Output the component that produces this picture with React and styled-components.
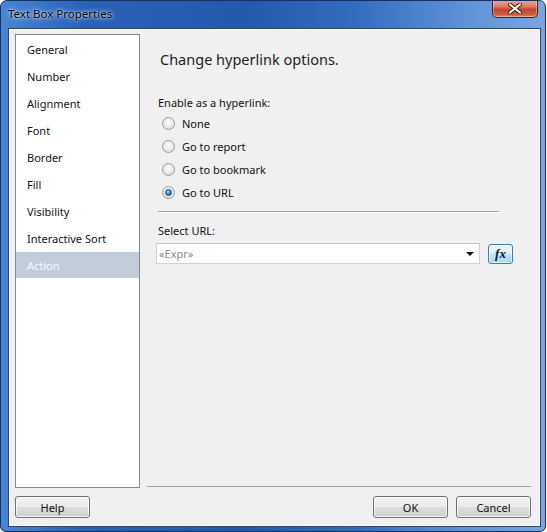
import React from "react";
import styled, { createGlobalStyle } from "styled-components";

const Global = createGlobalStyle`
  html, body { margin: 0; padding: 0; background: #ffffff; }
  body { font-family: "Noto Sans", "Open Sans", sans-serif; }
  * { box-sizing: border-box; }
`;

const Window = styled.div`
  width: 546px;
  height: 532px;
  border: 1px solid #163060;
  border-radius: 7px 7px 6px 6px;
  background-color: #2a62b8;
  background-image: linear-gradient(90deg, #4a85d4 0%, #2a62b8 15%, #2459ad 45%, #346cbd 65%, #5d92d8 85%, #7aa5e0 100%);
  display: flex;
  flex-direction: column;
  padding: 0 4px 4px 7px;
  overflow: hidden;
`;

const TitleBar = styled.div`
  height: 27px;
  display: flex;
  align-items: flex-start;
  justify-content: space-between;
`;

const Title = styled.div`
  font-size: 11.5px;
  line-height: 12px;
  color: #000;
  padding-top: 7px;
  text-shadow: 0 0 5px rgba(255,255,255,0.9), 0 0 2px rgba(255,255,255,0.8);
`;

const CloseButton = styled.div`
  width: 46px;
  height: 18px;
  margin-top: -1px;
  margin-right: 3px;
  border: 1px solid #4b1d17;
  border-top: none;
  border-radius: 0 0 5px 5px;
  background: linear-gradient(180deg, #e9aa98 0%, #d77b65 40%, #c24530 55%, #cf5a3d 85%, #e18b66 100%);
  box-shadow: inset 0 0 0 1px rgba(255,255,255,0.35);
  display: flex;
  align-items: center;
  justify-content: center;
`;

const Client = styled.div`
  flex: 1;
  background: #f0f0f0;
  border: 1px solid #2c4670;
  box-shadow: inset 0 0 0 1px rgba(255,255,255,0.6);
  display: flex;
  flex-direction: column;
  padding: 5px 9px 8px 6px;
`;

const Body = styled.div`
  flex: 1;
  display: flex;
  gap: 7px;
`;

const NavList = styled.ul`
  width: 125px;
  margin: 0;
  padding: 1px 0 0;
  list-style: none;
  background: #ffffff;
  border: 1px solid #828790;
`;

const NavItem = styled.li`
  height: 26px;
  margin-bottom: 1px;
  padding-left: 11px;
  display: flex;
  align-items: center;
  font-size: 11px;
  color: ${(p) => (p.$active ? "#f7f9fb" : "#111")};
  background: ${(p) => (p.$active ? "#c1cddb" : "transparent")};
`;

const Content = styled.div`
  flex: 1;
  display: flex;
  flex-direction: column;
  padding: 15px 0 0 9px;
  margin-bottom: 1px;
  border-bottom: 1px solid #a0a0a0;
`;

const Heading = styled.h1`
  margin: 0 0 26px 4px;
  font-size: 14.5px;
  font-weight: normal;
  line-height: 20px;
  color: #1e1e1e;
`;

const Label = styled.div`
  margin-left: 2px;
  font-size: 11px;
  line-height: 16px;
  color: #111;
`;

const RadioGroup = styled.div`
  display: flex;
  flex-direction: column;
  margin: 1px 0 7px;
`;

const RadioRow = styled.label`
  height: 23px;
  display: flex;
  align-items: center;
  padding-left: 6px;
  gap: 7px;
  font-size: 11px;
  color: #111;
`;

const RadioCircle = styled.span`
  width: 13px;
  height: 13px;
  border-radius: 50%;
  border: 1px solid #9a9a9a;
  background: radial-gradient(circle at 50% 40%, #fdfdfd 0%, #e9e9e9 55%, #d3d3d3 100%);
  display: flex;
  align-items: center;
  justify-content: center;
`;

const RadioDot = styled.span`
  width: 7px;
  height: 7px;
  border-radius: 50%;
  border: 1px solid #1b4a73;
  background: radial-gradient(circle at 40% 35%, #b5e2ff 0%, #3d8fd0 45%, #12508c 100%);
`;

const Separator = styled.div`
  height: 1px;
  width: 341px;
  margin-left: 2px;
  background: #a0a0a0;
  border-bottom: 1px solid #ffffff;
  box-sizing: content-box;
  margin-bottom: 10px;
`;

const FieldRow = styled.div`
  display: flex;
  align-items: center;
  gap: 8px;
  margin-top: 4px;
`;

const Combo = styled.div`
  width: 324px;
  height: 21px;
  background: #fff;
  border: 1px solid #d0d0d0;
  border-top-color: #c2c2c2;
  display: flex;
  align-items: center;
  justify-content: space-between;
  padding: 0 5px 0 2px;
  font-size: 11px;
  color: #8a8a8a;
`;

const Arrow = styled.span`
  width: 0;
  height: 0;
  border-left: 4px solid transparent;
  border-right: 4px solid transparent;
  border-top: 4px solid #111;
`;

const FxButton = styled.div`
  width: 25px;
  height: 20px;
  border: 1px solid #3c7fb1;
  border-radius: 3px;
  background: linear-gradient(180deg, #eaf6fd 0%, #d9f0fc 50%, #bee6fd 51%, #a7d9f5 100%);
  box-shadow: inset 0 0 0 1px rgba(255,255,255,0.6);
  display: flex;
  align-items: center;
  justify-content: center;
  font-family: "Liberation Serif", "DejaVu Serif", serif;
  font-style: italic;
  font-weight: bold;
  font-size: 13px;
  color: #111;
  line-height: 1;
`;

const Footer = styled.div`
  display: flex;
  align-items: center;
  gap: 8px;
  margin-top: 8px;
`;

const Spacer = styled.div`
  flex: 1;
`;

const Button = styled.button`
  width: 75px;
  height: 22px;
  border: 1px solid #707070;
  border-radius: 3px;
  background: linear-gradient(180deg, #f2f2f2 0%, #ebebeb 48%, #dddddd 52%, #cfcfcf 100%);
  box-shadow: inset 0 0 0 1px rgba(255,255,255,0.7);
  font-family: "Noto Sans", "Open Sans", sans-serif;
  font-size: 11px;
  color: #111;
  padding: 0;
  display: flex;
  align-items: center;
  justify-content: center;
`;

const navItems = [
  "General",
  "Number",
  "Alignment",
  "Font",
  "Border",
  "Fill",
  "Visibility",
  "Interactive Sort",
  "Action",
];

const options = ["None", "Go to report", "Go to bookmark", "Go to URL"];

export default function App() {
  return (
    <>
      <Global />
      <Window>
        <TitleBar>
          <Title>Text Box Properties</Title>
          <CloseButton>
            <svg width="14" height="11" viewBox="0 0 14 11">
              <path
                d="M2 1.5 L12 9.5 M12 1.5 L2 9.5"
                stroke="#3a1a14"
                strokeWidth="4"
                strokeLinecap="round"
              />
              <path
                d="M2 1.5 L12 9.5 M12 1.5 L2 9.5"
                stroke="#ffffff"
                strokeWidth="2.2"
                strokeLinecap="round"
              />
            </svg>
          </CloseButton>
        </TitleBar>
        <Client>
          <Body>
            <NavList>
              {navItems.map((n) => (
                <NavItem key={n} $active={n === "Action"}>
                  {n}
                </NavItem>
              ))}
            </NavList>
            <Content>
              <Heading>Change hyperlink options.</Heading>
              <Label>Enable as a hyperlink:</Label>
              <RadioGroup>
                {options.map((o) => (
                  <RadioRow key={o}>
                    <RadioCircle>{o === "Go to URL" && <RadioDot />}</RadioCircle>
                    {o}
                  </RadioRow>
                ))}
              </RadioGroup>
              <Separator />
              <Label>Select URL:</Label>
              <FieldRow>
                <Combo>
                  <span>«Expr»</span>
                  <Arrow />
                </Combo>
                <FxButton>fx</FxButton>
              </FieldRow>
            </Content>
          </Body>
          <Footer>
            <Button>Help</Button>
            <Spacer />
            <Button>OK</Button>
            <Button>Cancel</Button>
          </Footer>
        </Client>
      </Window>
    </>
  );
}
